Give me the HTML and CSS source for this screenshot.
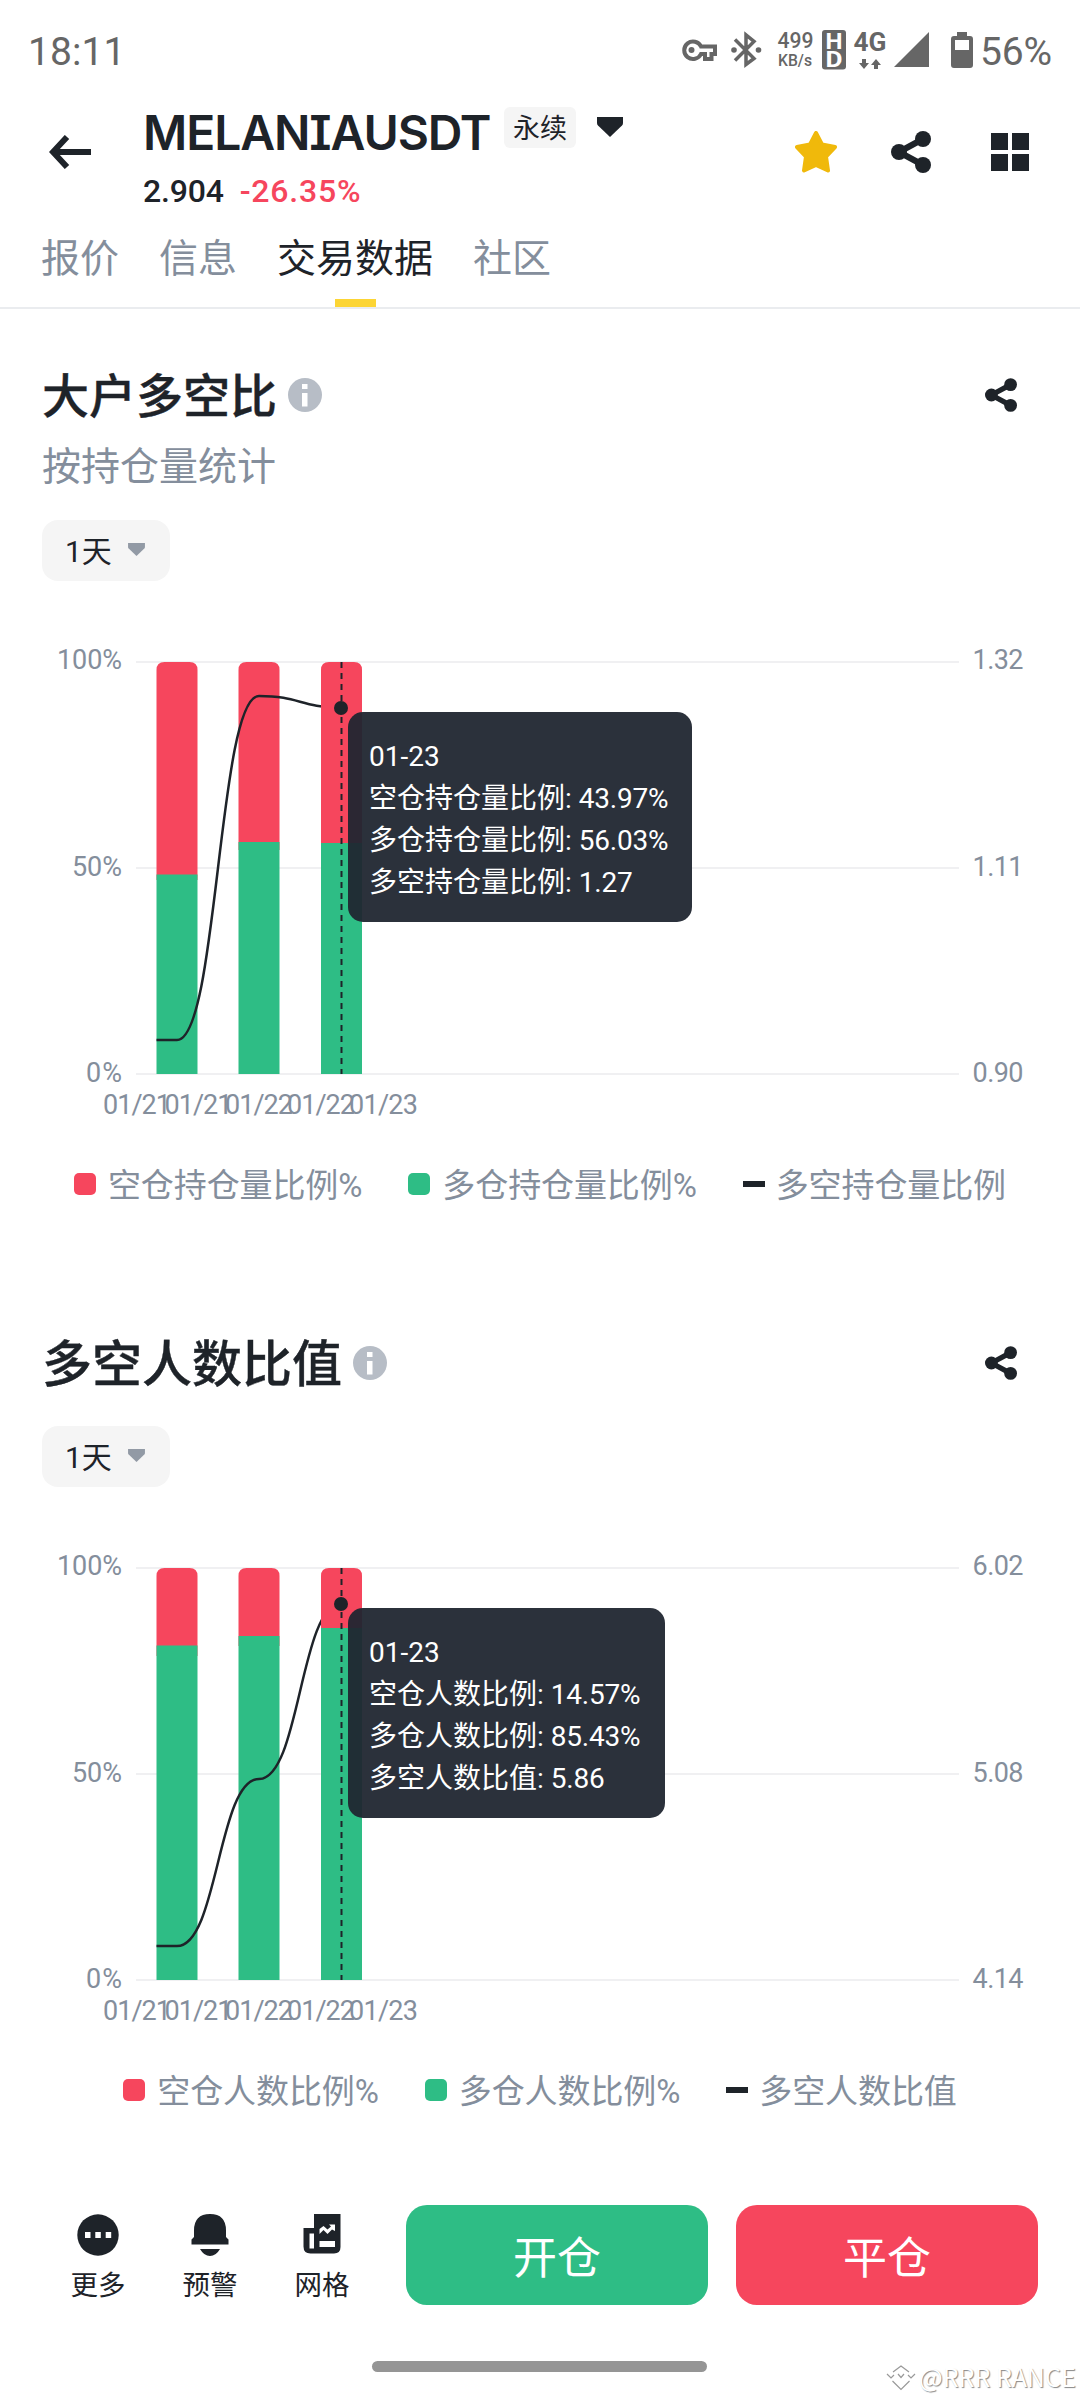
FILE: index.html
```html
<!DOCTYPE html>
<html lang="zh-CN">
<head>
<meta charset="utf-8">
<title>MELANIAUSDT 永续</title>
<link rel="stylesheet" href="styles.css">
</head>
<body>
<svg width="0" height="0" class="defs">
  <symbol id="share" viewBox="0 0 40 42">
    <path d="M8 21 32 8M8 21 32 34" fill="none" stroke="#1e2329" stroke-width="6.5"/>
    <circle cx="8" cy="21" r="8"/><circle cx="32" cy="8" r="8"/><circle cx="32" cy="34" r="8"/>
  </symbol>
  <symbol id="info" viewBox="0 0 34 34">
    <circle cx="17" cy="17" r="17" fill="#b7bdc6"/>
    <path d="M14 15h5.500v13.500H14zM14 6h5.500v5H14z" fill="#fff"/>
  </symbol>
  <symbol id="caret" viewBox="0 0 26 20">
    <path d="M0 0H26V6Q26 7.500 25 8.500L13 20 1 8.500Q0 7.500 0 6Z"/>
  </symbol>
</svg>
<div class="screen">
  <header class="status">
    <span class="clock">18:11</span>
    <svg class="status-icons" width="372" height="44" viewBox="682 28 372 44">
      <g fill="none" stroke="#666" stroke-width="4">
        <path d="M701.500 46.500H715V54H711.500V59H705V54H701A8.800 8.800 0 1 1 701 46.500Z"/>
        <path d="M735 39.500 754 58.500 746 64.500V35L754 41.500 735 60.500" stroke-width="3.500"/>
      </g>
      <g fill="#666">
        <circle cx="691.500" cy="50" r="3"/><circle cx="734" cy="50" r="2.800"/><circle cx="758.500" cy="50" r="2.800"/>
        <path d="M929 32V67H894Z"/>
        <path d="M957 32h10v4h3q3 0 3 3v26q0 3-3 3h-16q-3 0-3-3V39q0-3 3-3h3zM955 40v10h14V40z" fill-rule="evenodd"/>
        <rect x="822" y="30" width="24" height="39.500" rx="3"/>
        <path d="M862 59h4v4h3l-5 6-5-6h3zM874 69h4v-4h3l-5-6-5 6h3z"/>
        <text x="777.500" y="48" font-size="22" font-weight="500" textLength="36" lengthAdjust="spacingAndGlyphs">499</text>
        <text x="778" y="66" font-size="16.500" font-weight="500" textLength="34" lengthAdjust="spacingAndGlyphs">KB/s</text>
        <text x="853.500" y="50.500" font-size="26" font-weight="700" textLength="33" lengthAdjust="spacingAndGlyphs">4G</text>
        <text x="980" y="65" font-size="39" textLength="72">56%</text>
      </g>
      <g fill="#fff" font-weight="700" font-size="22">
        <text x="825.500" y="48.500" textLength="17" lengthAdjust="spacingAndGlyphs">H</text>
        <text x="825.500" y="66.500" textLength="17" lengthAdjust="spacingAndGlyphs">D</text>
      </g>
    </svg>
  </header>

  <div class="head">
    <svg class="back" width="42" height="34" viewBox="0 0 42 34"><path d="M42 17H4M18 2 4 17 18 32" fill="none" stroke="#1e2329" stroke-width="6"/></svg>
    <div class="pair">
      <div class="pair-top">
        <h1>MELANIAUSDT</h1><span class="badge">永续</span>
        <svg class="pair-caret" width="26" height="20"><use href="#caret"/></svg>
      </div>
      <div class="price"><span>2.904</span><span class="down">-26.35%</span></div>
    </div>
    <svg class="star" width="42" height="42" viewBox="0 0 42 42"><path d="M21 2 27 13.500 40 16 31 25.500 33 39.500 21 34 9 39.500 11 25.500 2 16 15 13.500Z" fill="#f0b90b" stroke="#f0b90b" stroke-width="4" stroke-linejoin="round"/></svg>
    <svg class="share" width="40" height="42"><use href="#share"/></svg>
    <svg width="38" height="38" viewBox="0 0 38 38"><path d="M0 0h17v17H0zM21 0h17v17H21zM0 21h17v17H0zM21 21h17v17H21z"/></svg>
  </div>

  <nav class="tabs">
    <span>报价</span><span>信息</span><span class="active">交易数据</span><span>社区</span>
  </nav>

  <section class="panel">
    <div class="title-row">
      <h2>大户多空比</h2><svg class="info" width="34" height="34"><use href="#info"/></svg>
      <svg class="share-s" width="32" height="34"><use href="#share"/></svg>
    </div>
    <p class="sub">按持仓量统计</p>
    <div class="pill">1天<svg width="17" height="13"><use href="#caret"/></svg></div>
    <div class="chart">
      <svg width="1080" height="480" viewBox="0 0 1080 480">
        <path class="grid" d="M136 22H959M136 228H959M136 434H959"/>
        <g class="short"><path d="M156.500 240V30q0-8 8-8h25q8 0 8 8V240z"/><path d="M238.500 210V30q0-8 8-8h25q8 0 8 8V210z"/></g>
        <g class="long"><path d="M156.500 234.500h41V434h-41zM238.500 202h41V434h-41z"/></g>
        <path class="line" d="M156.500 400H177C218 400 218 56 259 56C300 56 300 67.500 341 67.500"/>
        <path class="short" d="M321 210V30q0-8 8-8h25q8 0 8 8V210z"/><path class="long" d="M321 203h41V434h-41z"/>
        <path class="cursor" d="M341.500 22V434"/><circle cx="341" cy="68" r="7"/>
        <g class="axis">
          <text x="57" y="29" textLength="65">100%</text><text x="72" y="236" textLength="50">50%</text><text x="86" y="442" textLength="36">0%</text>
          <text x="972.500" y="29" textLength="51">1.32</text><text x="972.500" y="236" textLength="51">1.11</text><text x="972.500" y="442" textLength="51">0.90</text>
          <text x="103" y="474" textLength="68">01/21</text><text x="164.500" y="474" textLength="68">01/21</text><text x="225" y="474" textLength="68">01/22</text><text x="287" y="474" textLength="68">01/22</text><text x="349" y="474" textLength="69">01/23</text>
        </g>
      </svg>
      <div class="tip tip-a"><div>01-23</div><div>空仓持仓量比例: <b>43.97%</b></div><div>多仓持仓量比例: <b>56.03%</b></div><div>多空持仓量比例: <b>1.27</b></div></div>
    </div>
    <div class="legend"><span><i class="sw red"></i><em>空仓持仓量比例%</em></span><span><i class="sw green"></i><em>多仓持仓量比例%</em></span><span><i class="dash"></i><em>多空持仓量比例</em></span></div>
  </section>

  <section class="panel second">
    <div class="title-row">
      <h2>多空人数比值</h2><svg class="info" width="34" height="34"><use href="#info"/></svg>
      <svg class="share-s" width="32" height="34"><use href="#share"/></svg>
    </div>
    <div class="pill">1天<svg width="17" height="13"><use href="#caret"/></svg></div>
    <div class="chart">
      <svg width="1080" height="480" viewBox="0 0 1080 480">
        <path class="grid" d="M136 22H959M136 228H959M136 434H959"/>
        <g class="short"><path d="M156.500 110V30q0-8 8-8h25q8 0 8 8V110z"/><path d="M238.500 100V30q0-8 8-8h25q8 0 8 8V100z"/></g>
        <g class="long"><path d="M156.500 99.500h41V434h-41zM238.500 90h41V434h-41z"/></g>
        <path class="line" d="M156.500 400H177C218 400 218 233 259 233C300 233 300 58 341 58"/>
        <path class="short" d="M321 90V30q0-8 8-8h25q8 0 8 8V90z"/><path class="long" d="M321 82h41V434h-41z"/>
        <path class="cursor" d="M341.500 22V434"/><circle cx="341" cy="58" r="7"/>
        <g class="axis">
          <text x="57" y="29" textLength="65">100%</text><text x="72" y="236" textLength="50">50%</text><text x="86" y="442" textLength="36">0%</text>
          <text x="972.500" y="29" textLength="51">6.02</text><text x="972.500" y="236" textLength="51">5.08</text><text x="972.500" y="442" textLength="51">4.14</text>
          <text x="103" y="474" textLength="68">01/21</text><text x="164.500" y="474" textLength="68">01/21</text><text x="225" y="474" textLength="68">01/22</text><text x="287" y="474" textLength="68">01/22</text><text x="349" y="474" textLength="69">01/23</text>
        </g>
      </svg>
      <div class="tip tip-b"><div>01-23</div><div>空仓人数比例: <b>14.57%</b></div><div>多仓人数比例: <b>85.43%</b></div><div>多空人数比值: <b>5.86</b></div></div>
    </div>
    <div class="legend"><span><i class="sw red"></i><em>空仓人数比例%</em></span><span><i class="sw green"></i><em>多仓人数比例%</em></span><span><i class="dash"></i><em>多空人数比值</em></span></div>
  </section>

  <footer class="actions">
    <div class="tool"><svg width="42" height="42" viewBox="0 0 42 42"><circle cx="21" cy="21" r="20.700"/><path d="M8 18h5.500v6H8zM18.300 18h5.500v6h-5.500zM28.700 18h5.500v6h-5.500z" fill="#fff"/></svg>更多</div>
    <div class="tool"><svg width="42" height="42" viewBox="0 0 42 42"><path d="M4.500 30.500H2.500V25.500L5 23V16.500Q5 0 21 0T37 16.500V23L39.500 25.500V30.500ZM11 35H31Q27 42 21 42T11 35Z"/></svg>预警</div>
    <div class="tool"><svg width="42" height="42" viewBox="0 0 42 42"><path d="M13 0H39.500V33Q39.500 39.500 33 39.500H9.500Q2.500 39.500 2.500 32.500V14H13ZM8.500 19.500V34.500H13V19.500ZM18.500 27V33H34V27ZM18.500 15V20L22.500 16 26.500 20 31 15.500 34 17V10.500H28L30 12.500 26.500 15.500 22.500 12Z" fill-rule="evenodd"/></svg>网格</div>
    <button class="buy">开仓</button><button class="sell">平仓</button>
  </footer>
  <div class="home"></div>
  <div class="mark">
    <svg width="30" height="26" viewBox="0 0 30 26"><path d="M7 7 15 1 23 7M1 9 5 13 8 10M22 10 25 13 29 9M12 9 15 12.500 18 9M6.500 16 15 24.500 23.500 16"/></svg>
    <span>@RRR RANCE</span>
  </div>
</div>
</body>
</html>
```

FILE: styles.css
```css
* { box-sizing: border-box; }
body { margin: 0; background: #fff; color: #1e2329; font-family: Roboto, "Noto Sans CJK SC", sans-serif; }
svg { display: block; flex: none; fill: #1e2329; }
h1, h2, p { margin: 0; }
em { font-style: normal; }
.defs { position: absolute; }
.screen { position: relative; width: 1080px; height: 2400px; overflow: hidden; }

.status { display: flex; justify-content: space-between; height: 100px; padding: 28px 26px 0 28px; }
.clock { padding-top: 1px; font-size: 39px; line-height: 46px; color: #666; letter-spacing: .1px; }
.status-icons { overflow: visible; }

.head { display: flex; align-items: center; height: 104px; padding: 0 51px 0 49px; }
.back { margin-right: 52px; }
.pair { align-self: stretch; flex: 1; }
.pair-top { display: flex; height: 66px; }
h1 { width: 353px; font: 600 48px/66px Inter, sans-serif; font-feature-settings: "cv08"; letter-spacing: -1.1px; white-space: nowrap; }
.badge { width: 72px; height: 41px; margin-top: 7px; border-radius: 6px; background: #f5f5f5; font-size: 27px; line-height: 44px; text-align: center; margin-left: 8px; }
.pair-caret { margin: 17px 0 0 21px; }
.price { display: flex; gap: 16px; font-size: 32px; font-weight: 500; line-height: 50px; letter-spacing: -.2px; }
.price .down { color: #f6465d; letter-spacing: .8px; }
.star { margin-right: 54px; }
.share { margin-right: 60px; }

.tabs { display: flex; gap: 40px; height: 105px; padding: 26px 41px 0; border-bottom: 2px solid #eaecef; font-size: 39px; line-height: 58px; color: #848e9c; }
.tabs .active { display: flex; flex-direction: column; align-items: center; justify-content: space-between; color: #1e2329; }
.tabs .active::after { content: ""; width: 41px; height: 8px; background: #fcd535; }

.panel { padding-top: 55px; }
.title-row { display: flex; align-items: center; height: 62px; padding: 0 63px 0 42px; }
h2 { padding-top: 3px; font-size: 47px; line-height: 62px; font-weight: 500; -webkit-text-stroke: .4px #1e2329; }
.info { margin-left: 11px; }
.share-s { margin-left: auto; }
.sub { margin: 16px 0 28px 42px; font-size: 39px; line-height: 50px; color: #848e9c; }
.pill { display: flex; align-items: center; width: 128px; height: 61px; margin-left: 42px; padding: 3px 0 0 23px; border-radius: 16px; background: #f5f5f5; font-size: 30px; line-height: 58px; }
.pill svg { margin: -5px 0 0 16px; fill: #929aa5; }
.chart { position: relative; margin-top: 59px; }
.second { padding-top: 126px; }
.second h2 { font-size: 50px; }
.second .title-row { margin-bottom: 32px; }

.short { fill: #f6465d; }
.long { fill: #2ebd85; }
.grid { stroke: #f0f0f2; stroke-width: 2; }
.line { fill: none; stroke: #1e2329; stroke-width: 2.5; }
.cursor { stroke: #1e2329; stroke-width: 2; stroke-dasharray: 6 5; }
.axis { fill: #848e9c; font-size: 27px; }

.tip { position: absolute; left: 347.5px; height: 210px; padding: 24px 21.5px; border-radius: 15px; background: rgba(32, 38, 48, .95); color: #fff; font-size: 28px; line-height: 42px; white-space: nowrap; }
.tip b { font-weight: 400; letter-spacing: -.2px; }
.tip-a { top: 71.5px; width: 344.5px; }
.tip-b { top: 62px; width: 317px; }

.legend { display: flex; justify-content: center; gap: 46px; height: 44px; margin-top: 42px; font-size: 33px; line-height: 44px; letter-spacing: -.1px; color: #848e9c; }
.legend span { display: flex; align-items: center; }
.legend em { padding-top: 4px; }
.sw { width: 22px; height: 22px; margin-right: 12px; border-radius: 5px; }
.red { background: #f6465d; }
.green { background: #2ebd85; }
.dash { width: 22px; height: 6px; margin-right: 11px; background: #1e2329; }

.actions { display: flex; margin-top: 93px; padding-left: 42px; height: 100px; }
.tool { display: flex; flex-direction: column; align-items: center; width: 112px; padding-top: 9px; font-size: 27.5px; line-height: 38px; gap: 11px; }
button { width: 302px; height: 100px; padding: 0; border: 0; border-radius: 21px; color: #fff; font: 44px/100px "Noto Sans CJK SC", sans-serif; }
.buy { margin: 0 28px; background: #2ebd85; }
.sell { background: #f6465d; }
.home { width: 335px; height: 11px; margin: 56px 0 0 372px; border-radius: 6px; background: #959595; }
.mark { position: absolute; left: 886px; top: 2364px; display: flex; align-items: center; gap: 3px; color: #fff; font: 25px/30px "Noto Sans CJK SC", sans-serif; white-space: nowrap; text-shadow: 1px 1px 1px #888; }
.mark span { margin-top: -3px; }
.mark svg { fill: none; stroke: #999; stroke-width: 1.2; }
```
